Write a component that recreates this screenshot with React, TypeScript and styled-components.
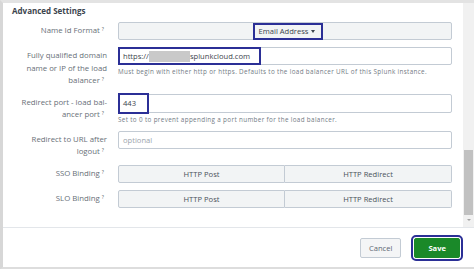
import * as React from 'react';
import styled, { createGlobalStyle } from 'styled-components';

const ANNOTATE = '#2b2f96';

const Global = createGlobalStyle`
  html, body { margin: 0; padding: 0; background: #fff; }
  body { font-family: "Open Sans", Lato, Arial, sans-serif; }
`;

//===============================
// @Styled
//===============================
const Frame = styled.div`
  width: 474px;
  height: 269px;
  box-sizing: border-box;
  border-top: 3px solid #e3e3e3;
  border-left: 3px solid #d7d7d7;
  border-bottom: 2px solid #dddddd;
  display: flex;
  flex-direction: column;
  background: #fff;
  overflow: hidden;
`;

const Body = styled.div`
  display: flex;
  height: 224px;
  flex-shrink: 0;
  border-bottom: 1px solid #e3e6ea;
`;

const Content = styled.div`
  flex: 1;
  overflow: hidden;
`;

const Heading = styled.h3`
  margin: 0 0 5px;
  padding: 2px 0 0 9px;
  font-size: 8px;
  line-height: 12px;
  font-weight: 700;
  color: #3c444d;
`;

const Form = styled.div`
  display: flex;
  flex-direction: column;
  gap: 7px;
`;

const Row = styled.div`
  display: grid;
  grid-template-columns: 104px 334px;
  column-gap: 11px;
  align-items: start;
`;

const Label = styled.div`
  padding: 2px 0 0 12px;
  text-align: right;
  font-size: 7.8px;
  line-height: 12.5px;
  color: #686f77;
  hyphens: manual;
`;

const Help = styled.span`
  display: inline-block;
  font-size: 5px;
  line-height: 5px;
  vertical-align: 2px;
  margin: 0 3px 0 2px;
  color: #5a6169;
`;

const Field = styled.div`
  display: flex;
  flex-direction: column;
`;

const TextBox = styled.div<{ $tall?: boolean }>`
  box-sizing: border-box;
  height: ${(p) => (p.$tall ? 19 : 18)}px;
  border: 1px solid #c3cbd4;
  border-radius: 2px;
  background: #fff;
  display: flex;
  align-items: center;
  font-size: 7.6px;
  color: #3c444d;
  padding-left: 4px;
  position: relative;
`;

const Placeholder = styled.span`
  color: #9aa3ac;
`;

const Redacted = styled.span`
  display: inline-block;
  width: 41px;
  height: 11px;
  background: #c9c9c9;
  filter: blur(0.6px);
`;

const Mark = styled.span`
  position: absolute;
  left: -1px;
  top: -1px;
  bottom: -1px;
  border: 2px solid ${ANNOTATE};
  pointer-events: none;
`;

const Hint = styled.div`
  margin-top: 3px;
  font-size: 6.3px;
  letter-spacing: 0.35px;
  line-height: 8px;
  color: #737b85;
  white-space: nowrap;
`;

const Dropdown = styled.div`
  box-sizing: border-box;
  height: 18px;
  border: 1px solid #c3cbd4;
  border-radius: 2px;
  background: #f2f4f5;
  display: flex;
  align-items: center;
  justify-content: center;
  font-size: 7.6px;
  color: #3c444d;
`;

const DropValue = styled.span`
  margin-left: 6px;
  padding: 2px 6px 2px 4px;
  border: 2px solid ${ANNOTATE};
  line-height: 9px;
`;

const Caret = styled.span`
  display: inline-block;
  margin-left: 3px;
  vertical-align: middle;
  border-left: 2.5px solid transparent;
  border-right: 2.5px solid transparent;
  border-top: 3px solid #3c444d;
`;

const Segmented = styled.div`
  display: grid;
  grid-template-columns: 1fr 1fr;
  height: 18px;
`;

const Segment = styled.div<{ $first?: boolean }>`
  box-sizing: border-box;
  border: 1px solid #c3cbd4;
  border-left-width: ${(p) => (p.$first ? 1 : 0)}px;
  border-radius: ${(p) => (p.$first ? '2px 0 0 2px' : '0 2px 2px 0')};
  background: #f2f4f5;
  display: flex;
  align-items: center;
  justify-content: center;
  font-size: 7.6px;
  color: #4a525b;
`;

const Scrollbar = styled.div`
  width: 11px;
  background: #f1f1f1;
  display: flex;
  flex-direction: column;
  align-items: center;
`;

const Thumb = styled.div`
  width: 9px;
  height: 65px;
  margin-top: 147px;
  background: #c1c1c1;
`;

const Arrow = styled.div`
  margin-top: 4px;
  border-left: 2px solid transparent;
  border-right: 2px solid transparent;
  border-top: 2px solid #a3a3a3;
`;

const Footer = styled.div`
  flex: 1;
  display: flex;
  align-items: center;
  justify-content: flex-end;
  gap: 13px;
  padding-right: 14px;
`;

const Button = styled.button<{ $primary?: boolean }>`
  height: 20px;
  padding: 0 ${(p) => (p.$primary ? 13 : 8)}px;
  font-family: inherit;
  font-size: 7.6px;
  font-weight: ${(p) => (p.$primary ? 700 : 400)};
  border-radius: 2px;
  border: 1px solid ${(p) => (p.$primary ? '#1a8929' : '#c3cbd4')};
  background: ${(p) => (p.$primary ? '#1a8929' : '#f4f5f6')};
  color: ${(p) => (p.$primary ? '#fff' : '#5c6773')};
  outline: ${(p) => (p.$primary ? `2px solid ${ANNOTATE}` : 'none')};
  outline-offset: 1px;
`;

//===============================
// @Component
//===============================
const FieldLabel: React.FC<{ children: React.ReactNode }> = ({ children }) => (
  <Label>
    {children}
    <Help>?</Help>
  </Label>
);

const App: React.FC = () => {
  return (
    <>
      <Global />
      <Frame>
        <Body>
          <Content>
            <Heading>Advanced Settings</Heading>
            <Form>
              <Row>
                <FieldLabel>Name Id Format</FieldLabel>
                <Dropdown>
                  <DropValue>
                    Email Address
                    <Caret />
                  </DropValue>
                </Dropdown>
              </Row>
              <Row>
                <FieldLabel>Fully qualified domain name or IP of the load balancer</FieldLabel>
                <Field>
                  <TextBox>
                    https://
                    <Redacted />
                    splunkcloud.com
                    <Mark style={{ width: 139 }} />
                  </TextBox>
                  <Hint>
                    Must begin with either http or https. Defaults to the load balancer URL of this Splunk instance.
                  </Hint>
                </Field>
              </Row>
              <Row>
                <FieldLabel>Redirect port - load bal&shy;ancer port</FieldLabel>
                <Field>
                  <TextBox $tall>
                    443
                    <Mark style={{ width: 27, top: -2, bottom: -2 }} />
                  </TextBox>
                  <Hint>Set to 0 to prevent appending a port number for the load balancer.</Hint>
                </Field>
              </Row>
              <Row>
                <FieldLabel>Redirect to URL after logout</FieldLabel>
                <TextBox>
                  <Placeholder>optional</Placeholder>
                </TextBox>
              </Row>
              <Row>
                <FieldLabel>SSO Binding</FieldLabel>
                <Segmented>
                  <Segment $first>HTTP Post</Segment>
                  <Segment>HTTP Redirect</Segment>
                </Segmented>
              </Row>
              <Row>
                <FieldLabel>SLO Binding</FieldLabel>
                <Segmented>
                  <Segment $first>HTTP Post</Segment>
                  <Segment>HTTP Redirect</Segment>
                </Segmented>
              </Row>
            </Form>
          </Content>
          <Scrollbar>
            <Thumb />
            <Arrow />
          </Scrollbar>
        </Body>
        <Footer>
          <Button>Cancel</Button>
          <Button $primary>Save</Button>
        </Footer>
      </Frame>
    </>
  );
};

export default App;
